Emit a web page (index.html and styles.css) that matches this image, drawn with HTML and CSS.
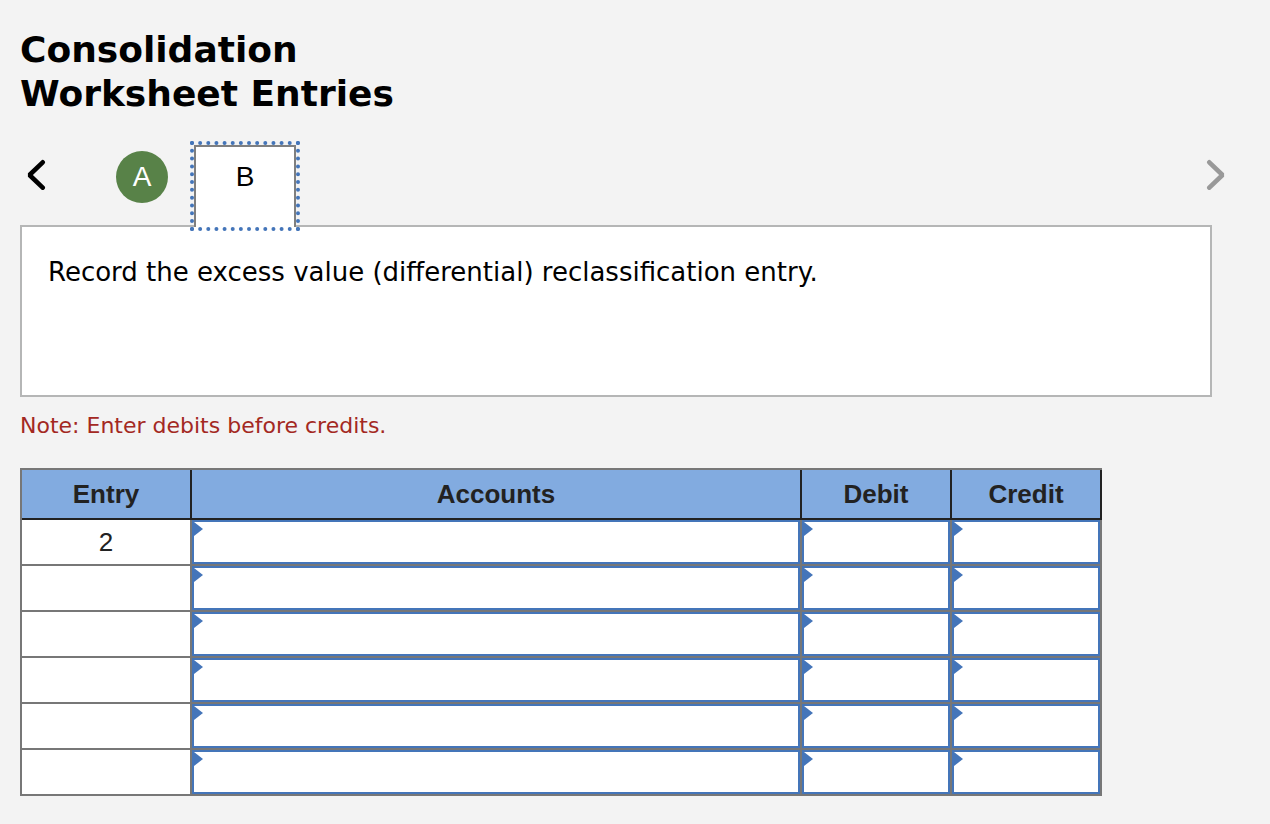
FILE: index.html
```
<!DOCTYPE html>
<html lang="en">
<head>
<meta charset="utf-8">
<title>Consolidation Worksheet Entries</title>
<link rel="stylesheet" href="styles.css">
</head>
<body>
<main class="worksheet">
  <h1 class="title">Consolidation<br>Worksheet Entries</h1>
  <nav class="pager" aria-label="Entries">
    <button class="arrow" type="button" aria-label="Previous entry">
      <svg width="32" height="32" viewBox="0 0 32 32"><path d="M22.7 4.3 9.5 17 22.7 29.7"/></svg>
    </button>
    <div class="tabs">
      <button class="tab-done" type="button">A</button>
      <button class="tab-active" type="button" aria-current="page">B</button>
    </div>
    <button class="arrow arrow-next" type="button" aria-label="Next entry">
      <svg width="32" height="32" viewBox="0 0 32 32"><path d="M11.3 4.3 24.5 17 11.3 29.7"/></svg>
    </button>
  </nav>
  <section class="panel">
    <p class="prompt">Record the excess value (differential) reclassification entry.</p>
  </section>
  <p class="note">Note: Enter debits before credits.</p>
  <table class="journal">
    <colgroup><col class="col-entry"><col><col class="col-amount"><col class="col-amount"></colgroup>
    <thead>
      <tr><th scope="col">Entry</th><th scope="col">Accounts</th><th scope="col">Debit</th><th scope="col">Credit</th></tr>
    </thead>
    <tbody>
      <tr><td>2</td><td class="cell"><input class="field" aria-label="Account, row 1"></td><td class="cell"><input class="field" aria-label="Debit, row 1"></td><td class="cell"><input class="field" aria-label="Credit, row 1"></td></tr>
      <tr><td></td><td class="cell"><input class="field" aria-label="Account, row 2"></td><td class="cell"><input class="field" aria-label="Debit, row 2"></td><td class="cell"><input class="field" aria-label="Credit, row 2"></td></tr>
      <tr><td></td><td class="cell"><input class="field" aria-label="Account, row 3"></td><td class="cell"><input class="field" aria-label="Debit, row 3"></td><td class="cell"><input class="field" aria-label="Credit, row 3"></td></tr>
      <tr><td></td><td class="cell"><input class="field" aria-label="Account, row 4"></td><td class="cell"><input class="field" aria-label="Debit, row 4"></td><td class="cell"><input class="field" aria-label="Credit, row 4"></td></tr>
      <tr><td></td><td class="cell"><input class="field" aria-label="Account, row 5"></td><td class="cell"><input class="field" aria-label="Debit, row 5"></td><td class="cell"><input class="field" aria-label="Credit, row 5"></td></tr>
      <tr><td></td><td class="cell"><input class="field" aria-label="Account, row 6"></td><td class="cell"><input class="field" aria-label="Debit, row 6"></td><td class="cell"><input class="field" aria-label="Credit, row 6"></td></tr>
    </tbody>
  </table>
</main>
</body>
</html>
```

FILE: styles.css
```
* { box-sizing: border-box; }

body {
  margin: 0;
  background: #f3f3f3;
  color: #000;
  font-family: Verdana, "DejaVu Sans", sans-serif;
}

.worksheet { padding: 28px 40px 28px 20px; }

.title {
  margin: 0;
  font-size: 36px;
  line-height: 44px;
  font-weight: bold;
}

.pager {
  display: flex;
  align-items: flex-start;
  margin-top: 29px;
}

.arrow {
  flex: none;
  margin-top: 13px;
  padding: 0;
  border: 0;
  background: none;
  color: #000;
  line-height: 0;
}

.arrow svg {
  fill: none;
  stroke: currentColor;
  stroke-width: 4.6;
  stroke-linecap: round;
  stroke-linejoin: bevel;
}

.arrow-next { color: #999; }

.tabs {
  display: flex;
  flex: 1;
  align-items: flex-start;
  gap: 26px;
  padding-left: 64px;
}

.tab-done,
.tab-active {
  padding: 0;
  font: 28px/52px Arial, "Liberation Sans", sans-serif;
}

.tab-done {
  width: 52px;
  height: 52px;
  margin-top: 6px;
  border: 0;
  border-radius: 50%;
  background: #588248;
  color: #fff;
}

.tab-active {
  position: relative;
  z-index: 1;
  width: 102px;
  height: 82px;
  padding-bottom: 20px;
  border: 2px solid #7f7f7f;
  border-bottom: 0;
  outline: 4px dotted #4475b9;
  background: #fff;
  color: #000;
}

.panel {
  min-height: 172px;
  margin: -2px 18px 0 0;
  padding: 24px 26px;
  border: 2px solid #b5b6b6;
  background: #fff;
}

.prompt {
  margin: 0;
  font-size: 26px;
  line-height: 42px;
}

.note {
  margin: 13px 0 26px;
  color: #a32822;
  font-size: 22px;
  line-height: 32px;
}

.journal {
  width: 100%;
  max-width: 1082px;
  border: 2px solid #777;
  border-right: 0;
  border-bottom: 0;
  border-spacing: 0;
  table-layout: fixed;
  background: #fff;
  color: #222;
  font-family: Arial, "Liberation Sans", sans-serif;
  font-size: 26px;
  line-height: 44px;
  text-align: center;
}

.col-entry { width: 170px; }
.col-amount { width: 150px; }

.journal th {
  height: 50px;
  padding: 0;
  border-right: 2px solid #222;
  border-bottom: 2px solid #222;
  background: #82abe0;
}

.journal td {
  height: 46px;
  padding: 0;
  border-right: 2px solid #777;
  border-bottom: 2px solid #777;
}

.cell { position: relative; }

.cell::before {
  content: "";
  position: absolute;
  top: 2px;
  left: 2px;
  border-left: 9px solid #4475b9;
  border-top: 7px solid transparent;
  border-bottom: 7px solid transparent;
}

.field {
  display: block;
  width: 100%;
  height: 44px;
  padding: 0 12px;
  border: 2px solid #4475b9;
  border-radius: 0;
  background: #fff;
  font: inherit;
}
```
